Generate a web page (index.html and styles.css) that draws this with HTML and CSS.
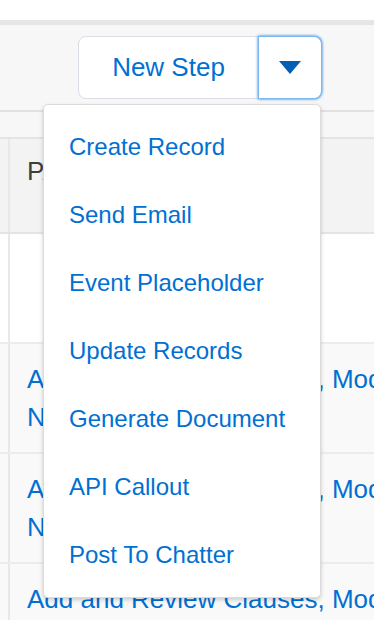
FILE: index.html
```html
<!DOCTYPE html>
<html lang="en">

<head>
    <meta charset="UTF-8">
    <meta name="viewport" content="width=device-width, initial-scale=1.0">
    <title>Steps</title>
    <link rel="stylesheet" href="styles.css">
</head>

<body>
    <div class="top"></div>

    <div class="toolbar">
        <div class="btn-group">
            <button class="btn btn-main" type="button">New Step</button>
            <button class="btn btn-icon is-focused" type="button" aria-label="More actions">
                <svg width="22" height="13" viewBox="0 0 22 13"><path d="M0 0h22L11 13z" /></svg>
            </button>

            <ul class="menu">
                <li><a href="#">Create Record</a></li>
                <li><a href="#">Send Email</a></li>
                <li><a href="#">Event Placeholder</a></li>
                <li><a href="#">Update Records</a></li>
                <li><a href="#">Generate Document</a></li>
                <li><a href="#">API Callout</a></li>
                <li><a href="#">Post To Chatter</a></li>
            </ul>
        </div>
    </div>

    <div class="grid">
        <div class="grid-band"></div>
        <div class="row row-head">
            <div class="stub"></div>
            <div class="cell">PATHS</div>
        </div>
        <div class="row">
            <div class="stub"></div>
            <div class="cell"></div>
        </div>
        <div class="row row-alt">
            <div class="stub"></div>
            <div class="cell"><a href="#">Add and Review Clauses, Modify Terms</a><br><a href="#">Negotiate</a></div>
        </div>
        <div class="row row-alt">
            <div class="stub"></div>
            <div class="cell"><a href="#">Add and Review Clauses, Modify Terms</a><br><a href="#">Negotiate</a></div>
        </div>
        <div class="row row-alt row-last">
            <div class="stub"></div>
            <div class="cell"><a href="#">Add and Review Clauses, Modify Terms</a></div>
        </div>
    </div>
</body>

</html>
```

FILE: styles.css
```css
body {
    margin: 0;
    font-family: "Liberation Sans", Arial, sans-serif;
    background: #fff;
    overflow: hidden;
}

a {
    color: #0070d2;
    text-decoration: none;
}

.top {
    height: 20px;
    background: #fff;
}

.toolbar {
    display: flex;
    justify-content: flex-end;
    height: 74px;
    padding: 11px 52px 0 0;
    background: #f7f7f7;
    border-top: 5px solid #e6e6e6;
}

.btn-group {
    position: relative;
    display: flex;
    height: 63px;
}

.btn {
    font-family: inherit;
    font-size: 26px;
    color: #0070d2;
    background: #fff;
    border: 1px solid #d8dde6;
    cursor: pointer;
}

.btn-main {
    width: 181px;
    border-radius: 8px 0 0 8px;
}

.btn-icon {
    width: 64px;
    margin-left: -1px;
    display: flex;
    align-items: center;
    justify-content: center;
    border-radius: 0 8px 8px 0;
}

.btn-icon svg {
    fill: #005fb2;
}

.is-focused {
    border-color: #7fb8ef;
    box-shadow: 0 0 3px #0070d2;
}

.menu {
    position: absolute;
    top: 68px;
    right: 1px;
    z-index: 10;
    width: 276px;
    margin: 0;
    padding: 8px 0;
    list-style: none;
    background: #fff;
    border: 1px solid #dddbda;
    border-radius: 5px;
    box-shadow: 0 2px 4px rgba(0, 0, 0, 0.18);
}

.menu li a {
    display: block;
    height: 68px;
    line-height: 68px;
    padding-left: 25px;
    font-size: 24px;
    white-space: nowrap;
}

.grid {
    border-top: 2px solid #e1e1e1;
}

.grid-band {
    height: 25px;
    background: #f7f7f7;
    border-bottom: 2px solid #e4e4e4;
}

.row {
    display: flex;
    height: 108px;
    background: #fff;
    border-bottom: 2px solid #ececec;
}

.row-head {
    height: 93px;
    background: #f3f3f3;
    border-bottom-color: #e4e4e4;
}

.row-alt {
    background: #f9f9f9;
}

.row-last {
    height: 56px;
    border-bottom: 0;
}

.stub {
    width: 8px;
    flex: none;
    border-right: 2px solid #e8e8e8;
}

.cell {
    flex: 1;
    min-width: 0;
    overflow: hidden;
    padding: 16px 0 0 17px;
    font-size: 26px;
    line-height: 38px;
    white-space: nowrap;
}

.row-head .cell {
    padding-top: 13px;
    color: #3e3e3c;
}
```
